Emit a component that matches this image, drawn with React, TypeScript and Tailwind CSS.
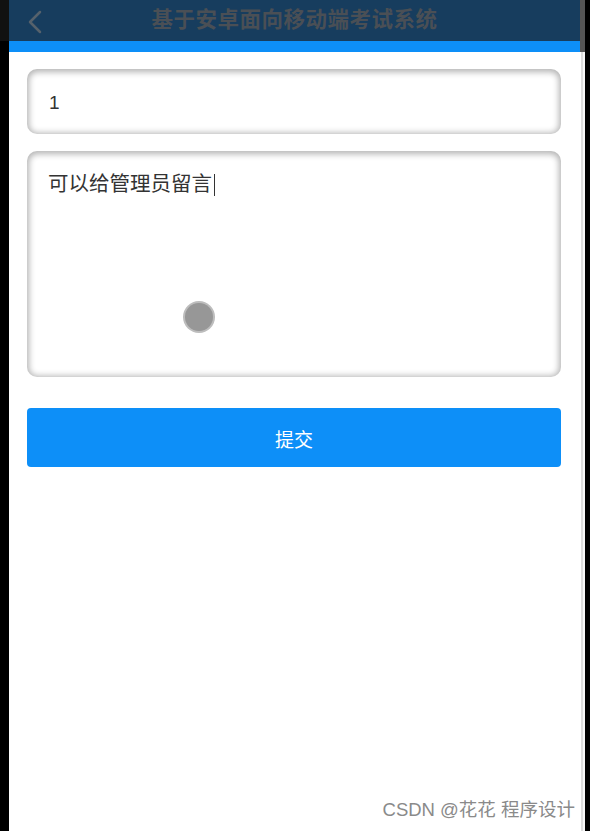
import React, { useState } from 'react';

const App: React.FC = () => {
    const [title, setTitle] = useState('1');
    const [content, setContent] = useState('可以给管理员留言');

    return (
        <div className="flex h-[831px] w-[590px] bg-black font-['Liberation_Sans','Noto_Sans_CJK_SC',sans-serif]">
            {/* left edge */}
            <div className="flex w-[9px] flex-col">
                <div className="h-[41px] bg-[#111111]"></div>
                <div className="flex-1 bg-black"></div>
            </div>

            <div className="relative flex w-[571px] flex-col bg-white">
                {/* header */}
                <div className="relative flex h-[41px] items-center justify-center bg-[#173d5e]">
                    <svg className="absolute left-[18px] top-[10px]" width="16" height="24" viewBox="0 0 16 24" fill="none">
                        <path d="M13 2L3 12l10 10" stroke="#56626c" strokeWidth="2.5" strokeLinecap="round" strokeLinejoin="round" />
                    </svg>
                    <h1 className="text-[21.5px] font-bold tracking-[0.5px] text-[#4a4f55]">基于安卓面向移动端考试系统</h1>
                </div>
                <div className="h-[11px] bg-[#0d8ff8]"></div>

                {/* form */}
                <div className="flex flex-col px-[18px] pt-[17px]">
                    <input
                        value={title}
                        onChange={e => setTitle(e.target.value)}
                        className="h-[65px] w-[534px] rounded-[10px] bg-white px-[22px] pt-[2px] text-[19px] text-[#333] shadow-[inset_0_1px_6px_2px_rgba(0,0,0,0.3)] outline-none"
                    />
                    <div className="relative mt-[17px]">
                        <textarea
                            value={content}
                            onChange={e => setContent(e.target.value)}
                            className="block h-[226px] w-[534px] resize-none rounded-[10px] bg-white px-[21px] pt-[19px] text-[20.5px] leading-[28px] text-[#333] shadow-[inset_0_1px_6px_2px_rgba(0,0,0,0.3)] outline-none"
                        />
                        {/* caret */}
                        <div className="absolute left-[187px] top-[23px] h-[22px] w-px bg-[#333]"></div>
                        {/* touch indicator */}
                        <div className="absolute left-[156px] top-[150px] h-[32px] w-[32px] rounded-full bg-[#bdbdbd] p-[2px]">
                            <div className="h-full w-full rounded-full bg-[#979797]"></div>
                        </div>
                    </div>
                    <button className="mt-[31px] h-[59px] w-[534px] rounded-[4px] bg-[#0d8ff8] pt-[8px] text-[19px] text-white">
                        提交
                    </button>
                </div>

                <div className="absolute bottom-[7px] right-[5px] text-[18.5px] text-[#8a8a8a]">CSDN @花花 程序设计</div>
            </div>

            {/* right edge */}
            <div className="flex w-[10px] flex-col">
                <div className="flex h-[52px]">
                    <div className="w-[5px] bg-[#555555]"></div>
                    <div className="flex-1 bg-black"></div>
                </div>
                <div className="flex flex-1">
                    <div className="w-[1px] bg-white"></div>
                    <div className="w-[2px] bg-[#dcdcdc]"></div>
                    <div className="w-[2px] bg-[#f7f7f7]"></div>
                    <div className="flex-1 bg-black"></div>
                </div>
            </div>
        </div>
    );
};

export default App;
